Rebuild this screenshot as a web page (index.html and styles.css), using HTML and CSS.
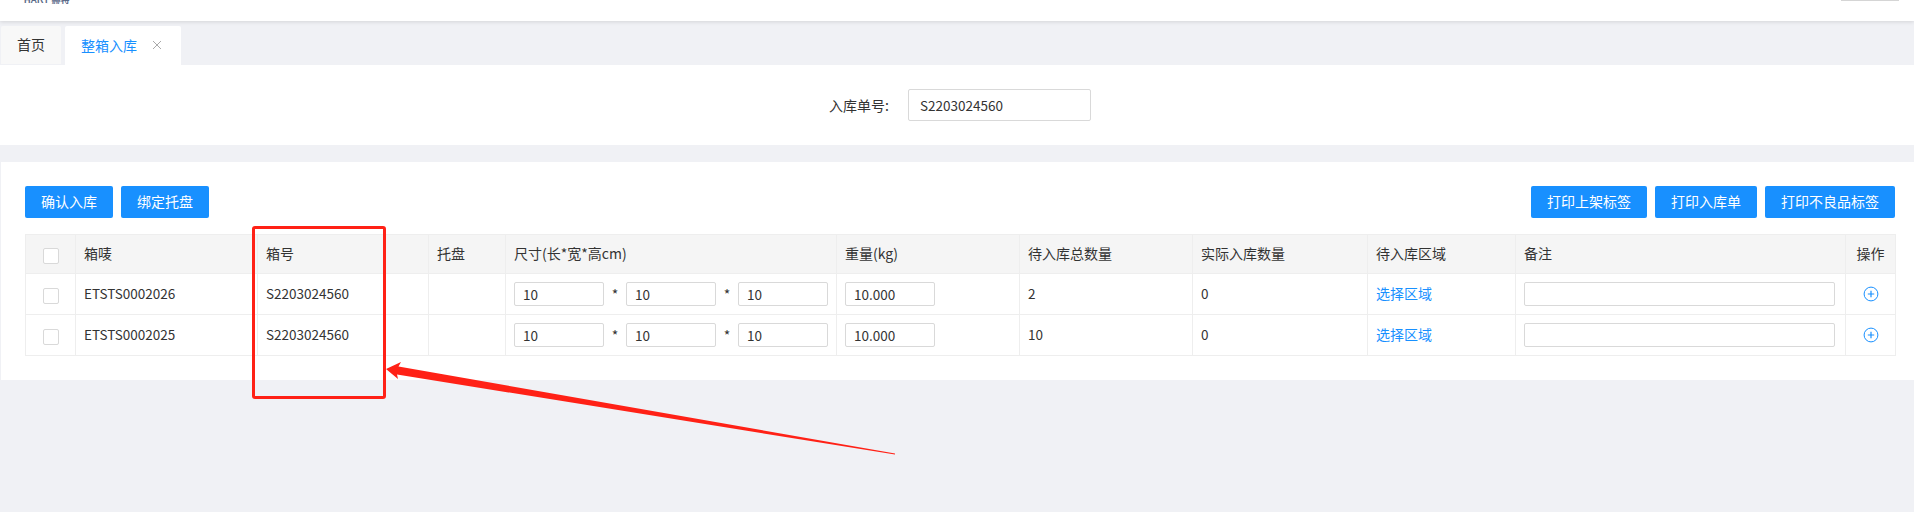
FILE: index.html
```html
<!DOCTYPE html>
<html lang="zh-CN">
<head>
  <meta charset="UTF-8">
  <title>整箱入库</title>
  <link rel="stylesheet" href="styles.css">
</head>
<body>

  <div class="header">
    <div class="logo">HART 赫特</div>
    <div class="user-box"></div>
  </div>

  <div class="tabs">
    <div class="tab">首页</div>
    <div class="tab active">
      整箱入库
      <svg class="tab-close" viewBox="0 0 10 10" width="10" height="10"><path d="M1 1L9 9M9 1L1 9" stroke="#aaa" stroke-width="1" fill="none"/></svg>
    </div>
  </div>

  <div class="search-panel">
    <label class="search-label">入库单号:</label>
    <input class="input search-input" value="S2203024560">
  </div>

  <div class="main-panel">
    <div class="toolbar">
      <div class="btn-group">
        <button class="btn">确认入库</button>
        <button class="btn">绑定托盘</button>
      </div>
      <div class="btn-group right">
        <button class="btn">打印上架标签</button>
        <button class="btn">打印入库单</button>
        <button class="btn">打印不良品标签</button>
      </div>
    </div>

    <table class="grid">
      <colgroup>
        <col class="c-check"><col class="c-mark"><col class="c-box"><col class="c-pallet"><col class="c-size">
        <col class="c-weight"><col class="c-total"><col class="c-actual"><col class="c-area"><col class="c-note"><col class="c-op">
      </colgroup>
      <thead>
        <tr>
          <th class="center"><span class="checkbox"></span></th>
          <th>箱唛</th>
          <th>箱号</th>
          <th>托盘</th>
          <th>尺寸(长*宽*高cm)</th>
          <th>重量(kg)</th>
          <th>待入库总数量</th>
          <th>实际入库数量</th>
          <th>待入库区域</th>
          <th>备注</th>
          <th class="center op-title">操作</th>
        </tr>
      </thead>
      <tbody>
        <tr>
          <td class="center"><span class="checkbox"></span></td>
          <td class="code">ETSTS0002026</td>
          <td class="code">S2203024560</td>
          <td></td>
          <td>
            <div class="size-row">
              <input class="input" value="10"><span class="times">*</span>
              <input class="input" value="10"><span class="times">*</span>
              <input class="input" value="10">
            </div>
          </td>
          <td><input class="input weight" value="10.000"></td>
          <td class="code">2</td>
          <td class="code">0</td>
          <td class="area"><a class="link">选择区域</a></td>
          <td><input class="input note"></td>
          <td class="center">
            <svg class="add" viewBox="0 0 16 16" width="16" height="16"><circle cx="8" cy="8" r="6.9" fill="none" stroke="#1890ff" stroke-width="1"/><path d="M8 4.8V11.2M4.8 8H11.2" stroke="#1890ff" stroke-width="1.2" fill="none"/></svg>
          </td>
        </tr>
        <tr>
          <td class="center"><span class="checkbox"></span></td>
          <td class="code">ETSTS0002025</td>
          <td class="code">S2203024560</td>
          <td></td>
          <td>
            <div class="size-row">
              <input class="input" value="10"><span class="times">*</span>
              <input class="input" value="10"><span class="times">*</span>
              <input class="input" value="10">
            </div>
          </td>
          <td><input class="input weight" value="10.000"></td>
          <td class="code">10</td>
          <td class="code">0</td>
          <td class="area"><a class="link">选择区域</a></td>
          <td><input class="input note"></td>
          <td class="center">
            <svg class="add" viewBox="0 0 16 16" width="16" height="16"><circle cx="8" cy="8" r="6.9" fill="none" stroke="#1890ff" stroke-width="1"/><path d="M8 4.8V11.2M4.8 8H11.2" stroke="#1890ff" stroke-width="1.2" fill="none"/></svg>
          </td>
        </tr>
      </tbody>
    </table>
  </div>

  <!-- red markup drawn on top of the screenshot -->
  <div class="mark-box"></div>
  <svg class="mark-arrow" viewBox="0 0 1914 512" width="1914" height="512">
    <path d="M386 369L401 362L398.500 366.500L895 453.500L895 454.500L397 374.500L398 379Z" fill="#ff2116"/>
  </svg>

</body>
</html>
```

FILE: styles.css
```css
* {
  box-sizing: border-box;
}

html,
body {
  height: 512px;
  overflow: hidden;
}

body {
  margin: 0;
  background: #f0f1f5;
  color: #333;
  font-family: "Noto Sans CJK SC", "Noto Sans", sans-serif;
  font-size: 14px;
}

.header {
  display: flex;
  justify-content: space-between;
  height: 21px;
  padding: 0 15px 0 24px;
  background: #fff;
  box-shadow: 0 1px 4px rgba(0, 0, 0, 0.12);
  overflow: hidden;
}

.logo {
  margin-top: -6px;
  height: 12px;
  font-family: "Liberation Sans", "Noto Sans CJK SC", sans-serif;
  font-size: 9px;
  font-weight: bold;
  line-height: 12px;
  color: #5a6a88;
}

.user-box {
  width: 58px;
  height: 1px;
  background: #d5d5d5;
}

.tabs {
  display: flex;
  gap: 4px;
  height: 44px;
  padding: 5px 0 0 1px;
}

.tab {
  display: flex;
  align-items: center;
  height: 38px;
  padding: 0 16px 2px;
  background: #f8f8f8;
  border-radius: 2px 2px 0 0;
  color: #333;
}

.tab.active {
  height: 39px;
  padding-right: 19px;
  background: #fff;
  color: #1890ff;
}

.tab-close {
  margin-left: 15px;
}

.search-panel {
  display: flex;
  align-items: center;
  height: 80px;
  padding-left: 829px;
  background: #fff;
}

.search-label {
  width: 79px;
}

.main-panel {
  height: 218px;
  margin: 17px 0 0 1px;
  padding: 24px 18px 0 24px;
  background: #fff;
}

.toolbar {
  display: flex;
  justify-content: space-between;
  width: 1870px;
  margin-bottom: 16px;
}

.btn-group {
  display: flex;
  gap: 8px;
}

.btn {
  height: 32px;
  padding: 0 16px 2px;
  border: 0;
  border-radius: 2px;
  background: #1890ff;
  color: #fff;
  font-family: inherit;
  font-size: 14px;
}

.input {
  height: 24px;
  padding: 0 8px;
  border: 1px solid #d9d9d9;
  border-radius: 2px;
  background: #fff;
  color: #333;
  font-family: inherit;
  font-size: 13.500px;
  outline: none;
}

.search-input {
  width: 183px;
  height: 32px;
  padding: 0 11px;
}

.grid {
  width: 1870px;
  border-collapse: collapse;
  table-layout: fixed;
  border: 1px solid #eee;
}

.grid th,
.grid td {
  padding: 0 4px 1px 8px;
  border: 1px solid #eee;
  font-weight: normal;
  text-align: left;
  white-space: nowrap;
}

.grid th {
  height: 39px;
  padding-bottom: 3px;
  background: #f5f5f5;
}

.grid td {
  height: 41px;
}

.grid .center {
  padding: 0;
  text-align: center;
}

.grid .op-title {
  padding-bottom: 3px;
}

.grid .code,
.grid .area {
  padding-bottom: 3px;
}

.grid .code {
  font-size: 13.500px;
}

.c-check { width: 50px; }
.c-mark { width: 182px; }
.c-box { width: 171px; }
.c-pallet { width: 77px; }
.c-size { width: 331px; }
.c-weight { width: 183px; }
.c-total { width: 173px; }
.c-actual { width: 175px; }
.c-area { width: 148px; }
.c-note { width: 330px; }
.c-op { width: 50px; }

.checkbox {
  display: inline-block;
  width: 16px;
  height: 16px;
  border: 1px solid #d9d9d9;
  border-radius: 2px;
  background: #fff;
  vertical-align: middle;
}

.size-row {
  display: flex;
  align-items: center;
}

.size-row .input {
  width: 90px;
}

.times {
  width: 22px;
  text-align: center;
}

.weight {
  width: 90px;
}

.note {
  width: 311px;
}

.link {
  color: #1890ff;
}

.add {
  display: block;
  margin: 0 auto;
}

.mark-box {
  position: absolute;
  left: 252px;
  top: 226px;
  width: 134px;
  height: 173px;
  border: 3px solid #ff2116;
  border-radius: 3px;
}

.mark-arrow {
  position: absolute;
  left: 0;
  top: 0;
}
```
